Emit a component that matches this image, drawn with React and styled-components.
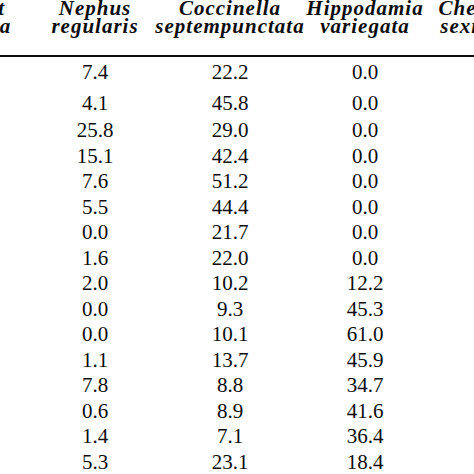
import React from 'react'
import styled, { createGlobalStyle } from "styled-components";

const columns = [
  { top: "Survey at", bottom: "Study area", values: [] },
  {
    top: "Nephus", bottom: "regularis",
    values: ["7.4","4.1","25.8","15.1","7.6","5.5","0.0","1.6","2.0","0.0","0.0","1.1","7.8","0.6","1.4","5.3"],
  },
  {
    top: "Coccinella", bottom: "septempunctata",
    values: ["22.2","45.8","29.0","42.4","51.2","44.4","21.7","22.0","10.2","9.3","10.1","13.7","8.8","8.9","7.1","23.1"],
  },
  {
    top: "Hippodamia", bottom: "variegata",
    values: ["0.0","0.0","0.0","0.0","0.0","0.0","0.0","0.0","12.2","45.3","61.0","45.9","34.7","41.6","36.4","18.4"],
  },
  {
    top: "Cheilomenes", bottom: "sexmaculata",
    values: ["0.0","0.0","0.0","0.0","0.0","0.0","0.0","0.0","0.0","0.0","0.0","0.0","0.0","0.0","0.0","0.0"],
  },
];

const rowHeights = [31, 30, 25.54, 25.54, 25.54, 25.54, 25.54, 25.54, 25.54, 25.54, 25.54, 25.54, 25.54, 25.54, 25.54, 25.54];

function App() {
  return (
    <>
      <GlobalStyle />
      <Figure>
        <Table>
          <Header>
            {columns.map((c, i) => (
              <HeadCell key={i}>
                <HeadLine>{c.top}</HeadLine>
                <HeadLine>{c.bottom}</HeadLine>
              </HeadCell>
            ))}
          </Header>
          {rowHeights.map((h, r) => (
            <Row key={r} $h={h}>
              {columns.map((c, i) => (
                <Cell key={i}>{c.values[r] || ""}</Cell>
              ))}
            </Row>
          ))}
        </Table>
      </Figure>
    </>
  );
}

export default App

const GlobalStyle = createGlobalStyle`
html, body {
  margin:0;
  padding:0;
  background:#fff;
}
body {
  width:474px;
  height:474px;
  overflow:hidden;
  font-family:"Liberation Serif", "Times New Roman", serif;
  color:#0d0d0d;
}`;

const Figure = styled.div`
width:474px;
height:474px;
overflow:hidden;`;

// the figure is a crop of a wider table, so the first column sits mostly off the left edge
const Table = styled.div`
width:675px;
margin-left:-107.5px;`;

const Header = styled.div`
display:grid;
grid-template-columns:repeat(5, 135px);
padding-bottom:19.8px;
border-bottom:2px solid #0d0d0d;`;

const HeadCell = styled.div`
display:flex;
flex-direction:column;
align-items:center;`;

const HeadLine = styled.span`
display:block;
font-weight:bold;
font-style:italic;
font-size:21px;
letter-spacing:1px;
line-height:17.6px;
white-space:nowrap;`;

const Row = styled.div`
display:grid;
grid-template-columns:repeat(5, 135px);
height:${(p) => p.$h}px;
line-height:${(p) => p.$h}px;`;

const Cell = styled.div`
text-align:center;
font-size:21px;`;
